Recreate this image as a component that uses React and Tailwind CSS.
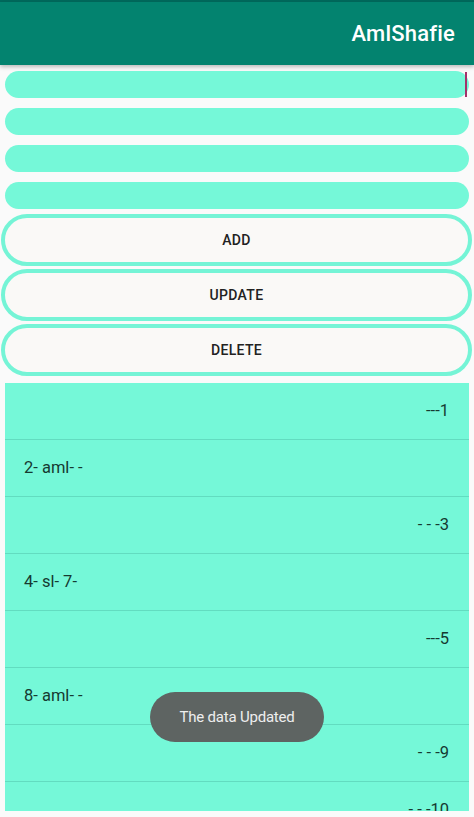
import React from 'react';

const rows = [
  { text: '---1', side: 'right' },
  { text: '2- aml- -', side: 'left' },
  { text: '- - -3', side: 'right' },
  { text: '4- sl- 7-', side: 'left' },
  { text: '---5', side: 'right' },
  { text: '8- aml- -', side: 'left' },
  { text: '- - -9', side: 'right' },
  { text: '- - -10', side: 'right' },
];

const buttons = ['ADD', 'UPDATE', 'DELETE'];

const App = () => {
  return (
    <div className="relative w-[474px] h-[817px] overflow-hidden bg-[#fafafa]" style={{ fontFamily: 'Roboto, "Noto Sans", sans-serif' }}>
      {/* toolbar */}
      <div className="h-[2px] bg-[#00695c]"></div>
      <div className="h-[63px] bg-[#03836f] flex items-center justify-end pr-[19px] shadow-[0_2px_4px_rgba(0,0,0,0.25)]">
        <span className="text-white text-[22px] font-medium tracking-[0.2px]">AmlShafie</span>
      </div>

      {/* inputs */}
      <div className="flex flex-col gap-[10px] px-[5px] pt-[6px]">
        {[0, 1, 2, 3].map((i) => (
          <div key={i} className="relative h-[27px] rounded-full bg-[#75f8d8]">
            {i === 0 && <div className="absolute right-[2px] top-[1px] w-[2px] h-[25px] bg-[#a3316a]"></div>}
          </div>
        ))}
      </div>

      {/* buttons */}
      <div className="flex flex-col gap-[3px] pl-[1px] pr-[2px] mt-[5px]">
        {buttons.map((label) => (
          <button
            key={label}
            className="h-[52px] rounded-full border-[4px] border-[#75f4d6] bg-[#faf9f7] text-[#222] text-[14px] font-medium tracking-[0.3px]"
          >
            {label}
          </button>
        ))}
      </div>

      {/* list */}
      <div className="mx-[5px] mt-[7px] h-[428px] overflow-hidden bg-[#75f8d8]">
        {rows.map((row, i) => (
          <div
            key={i}
            className={
              row.side === 'right'
                ? 'h-[57px] shrink-0 flex items-center justify-end pr-[20px] border-b border-[#62dcc0] text-[16.5px] text-[#163a31]'
                : 'h-[57px] shrink-0 flex items-center justify-start pl-[19px] border-b border-[#62dcc0] text-[16.5px] text-[#163a31]'
            }
          >
            {row.text}
          </div>
        ))}
      </div>

      {/* toast */}
      <div className="absolute left-[150px] top-[692px] w-[174px] h-[50px] rounded-full bg-[#5e6462] flex items-center justify-center">
        <span className="text-[#eeeeee] text-[15px] tracking-[-0.2px]">The data Updated</span>
      </div>
    </div>
  );
};

export default App;
